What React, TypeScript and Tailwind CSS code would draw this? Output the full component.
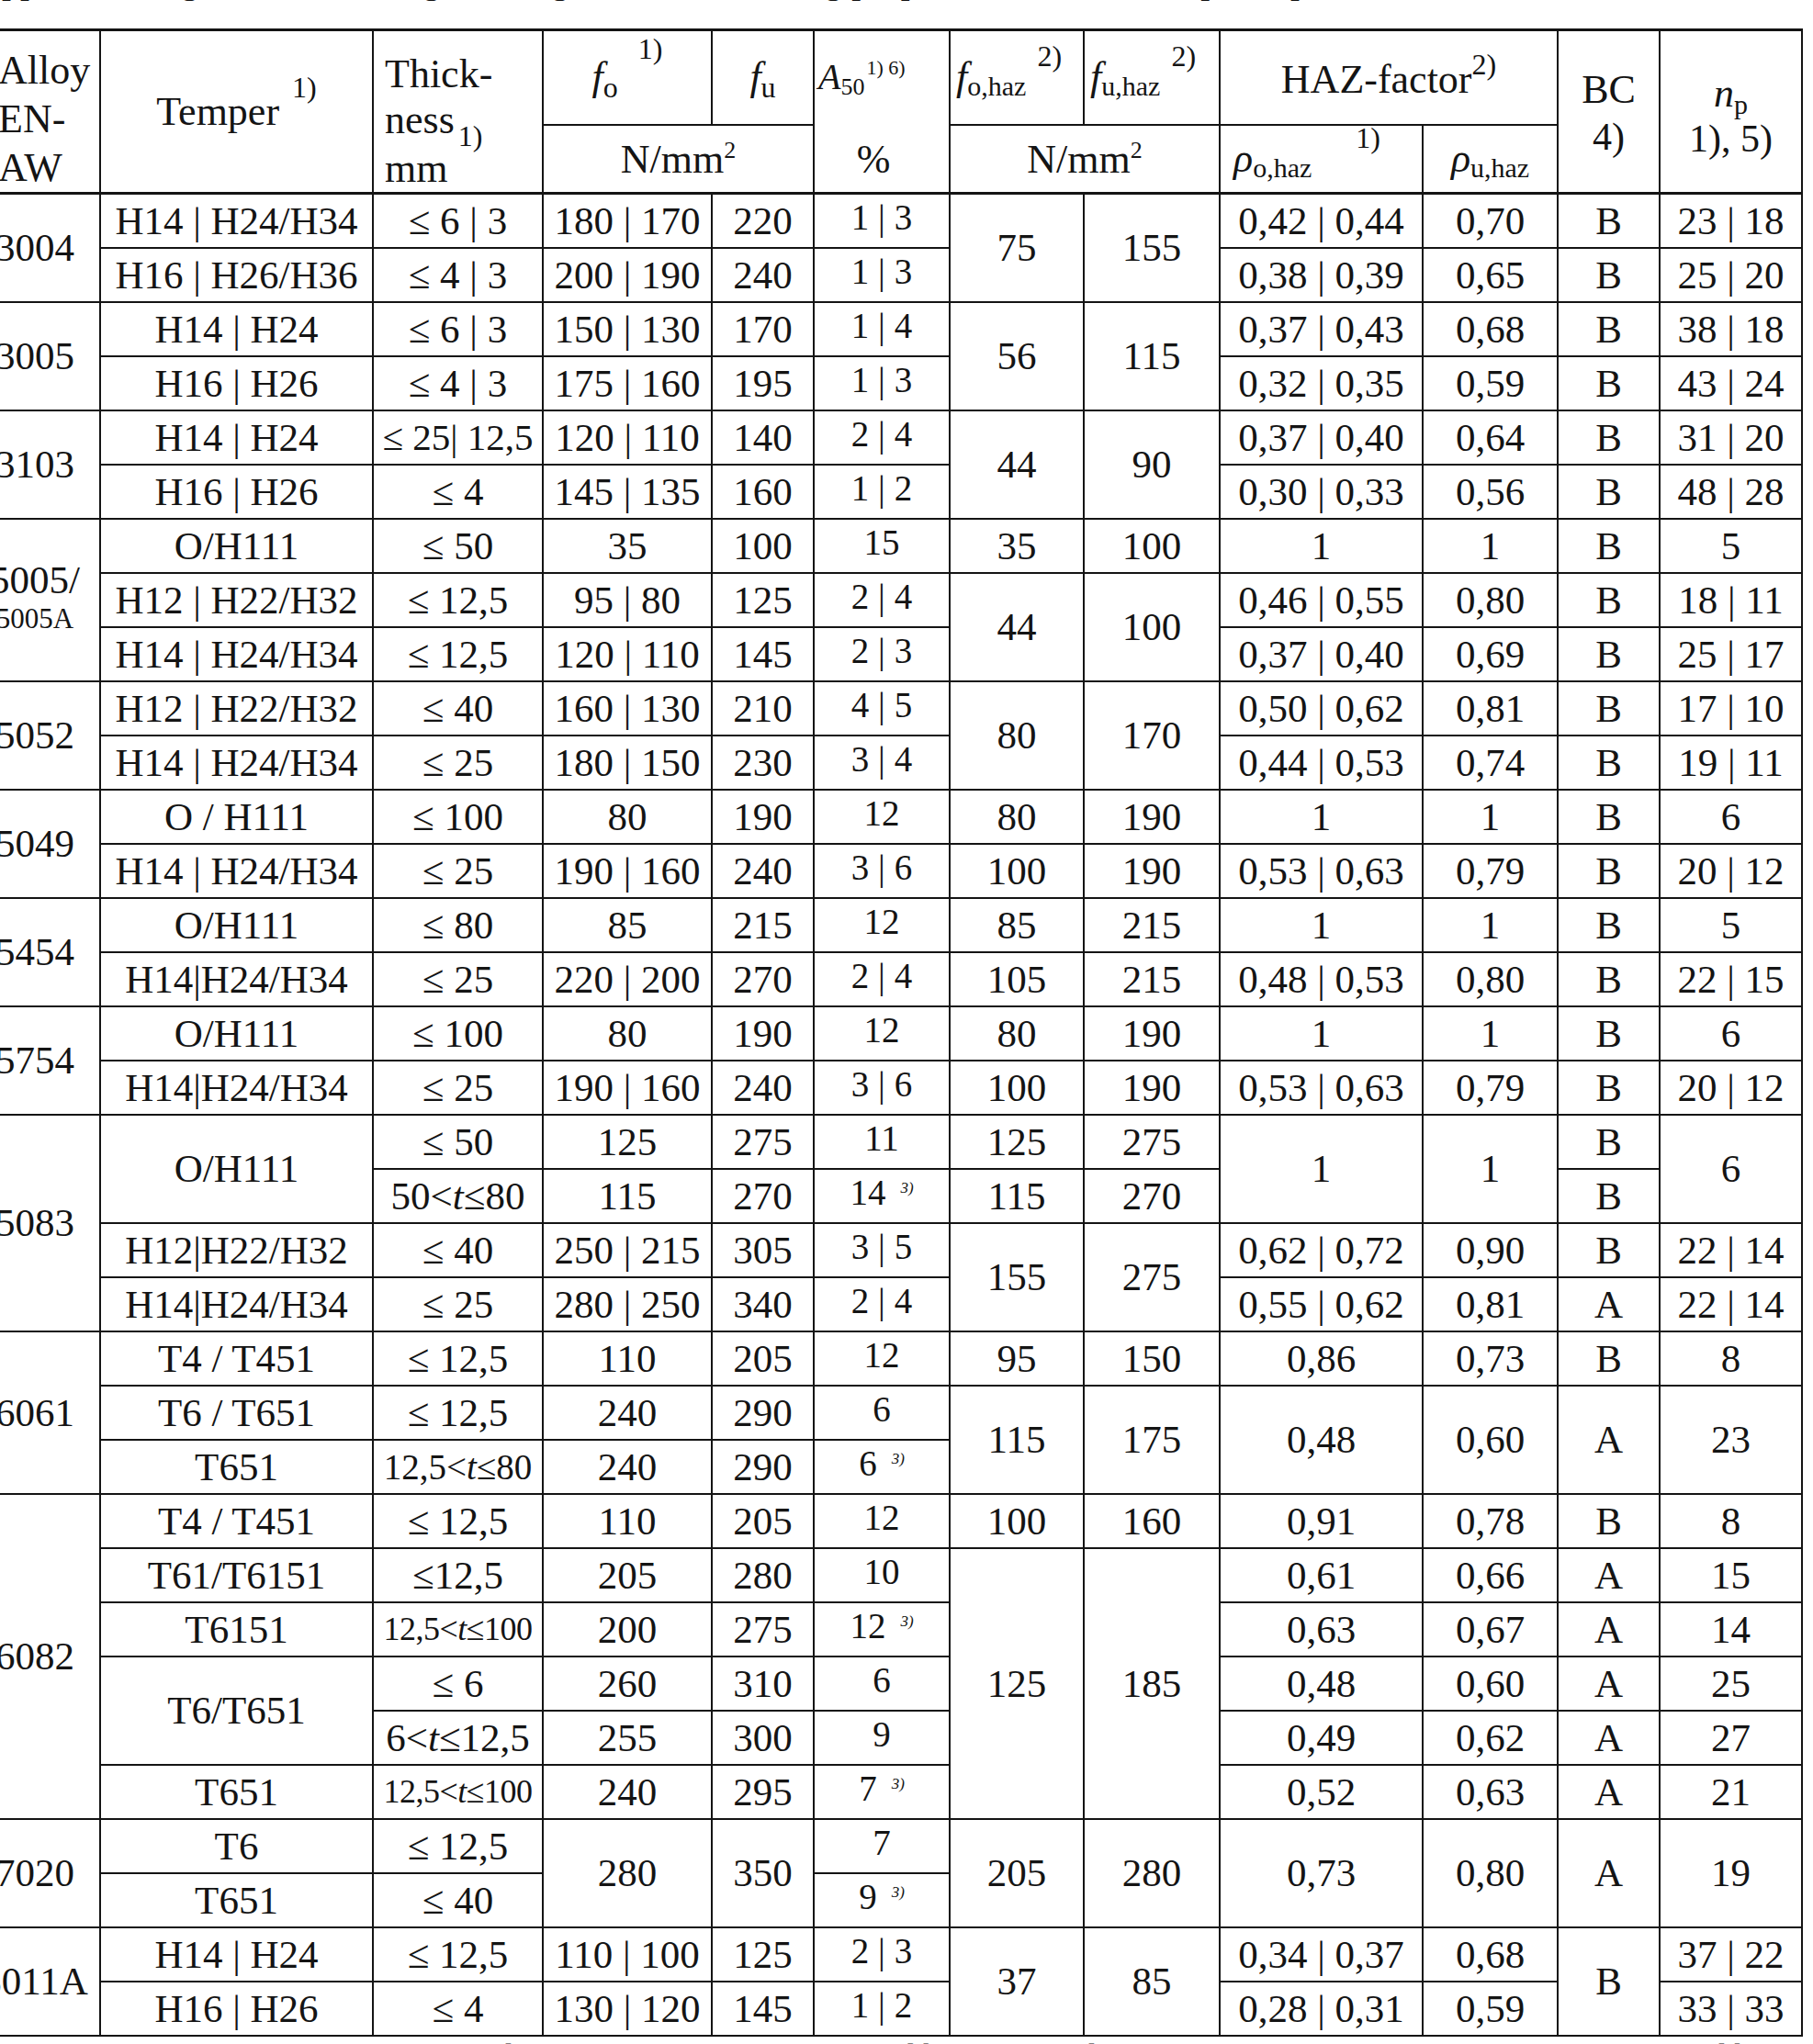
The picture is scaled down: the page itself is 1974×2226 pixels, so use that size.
import type { ReactNode } from "react"

type Cell = { v: ReactNode; rs?: number; cls: string }
type Group = { alloy: ReactNode; rows: Cell[][] }

function c(v: ReactNode, rs?: number, cls = "text-[43px]"): Cell {
  return { v, rs, cls }
}

// elongation figures are set a bit smaller and sit high in the cell
function pc(v: ReactNode, rs?: number): Cell {
  return c(v, rs, "text-[39px] pb-[8px]")
}

function N3({ v }: { v: string }) {
  return (
    <>
      {v}
      <span className="relative -top-[13px] ml-[16px] text-[17px] italic">3)</span>
    </>
  )
}

function Tt({ a, b }: { a: string; b: string }) {
  return (
    <>
      {a}
      <i>t</i>
      {b}
    </>
  )
}

const groups: Group[] = [
  {
    alloy: "3004",
    rows: [
      [c("H14 | H24/H34"), c("≤ 6 | 3"), c("180 | 170"), c("220"), pc("1 | 3"), c("75", 2), c("155", 2), c("0,42 | 0,44"), c("0,70"), c("B"), c("23 | 18")],
      [c("H16 | H26/H36"), c("≤ 4 | 3"), c("200 | 190"), c("240"), pc("1 | 3"), c("0,38 | 0,39"), c("0,65"), c("B"), c("25 | 20")],
    ],
  },
  {
    alloy: "3005",
    rows: [
      [c("H14 | H24"), c("≤ 6 | 3"), c("150 | 130"), c("170"), pc("1 | 4"), c("56", 2), c("115", 2), c("0,37 | 0,43"), c("0,68"), c("B"), c("38 | 18")],
      [c("H16 | H26"), c("≤ 4 | 3"), c("175 | 160"), c("195"), pc("1 | 3"), c("0,32 | 0,35"), c("0,59"), c("B"), c("43 | 24")],
    ],
  },
  {
    alloy: "3103",
    rows: [
      [c("H14 | H24"), c("≤ 25| 12,5", undefined, "text-[41px]"), c("120 | 110"), c("140"), pc("2 | 4"), c("44", 2), c("90", 2), c("0,37 | 0,40"), c("0,64"), c("B"), c("31 | 20")],
      [c("H16 | H26"), c("≤ 4"), c("145 | 135"), c("160"), pc("1 | 2"), c("0,30 | 0,33"), c("0,56"), c("B"), c("48 | 28")],
    ],
  },
  {
    alloy: (
      <div className="leading-[38px]">
        5005/
        <br />
        <span className="text-[31px]">5005A</span>
      </div>
    ),
    rows: [
      [c("O/H111"), c("≤ 50"), c("35"), c("100"), pc("15"), c("35"), c("100"), c("1"), c("1"), c("B"), c("5")],
      [c("H12 | H22/H32"), c("≤ 12,5"), c("95 | 80"), c("125"), pc("2 | 4"), c("44", 2), c("100", 2), c("0,46 | 0,55"), c("0,80"), c("B"), c("18 | 11")],
      [c("H14 | H24/H34"), c("≤ 12,5"), c("120 | 110"), c("145"), pc("2 | 3"), c("0,37 | 0,40"), c("0,69"), c("B"), c("25 | 17")],
    ],
  },
  {
    alloy: "5052",
    rows: [
      [c("H12 | H22/H32"), c("≤ 40"), c("160 | 130"), c("210"), pc("4 | 5"), c("80", 2), c("170", 2), c("0,50 | 0,62"), c("0,81"), c("B"), c("17 | 10")],
      [c("H14 | H24/H34"), c("≤ 25"), c("180 | 150"), c("230"), pc("3 | 4"), c("0,44 | 0,53"), c("0,74"), c("B"), c("19 | 11")],
    ],
  },
  {
    alloy: "5049",
    rows: [
      [c("O / H111"), c("≤ 100"), c("80"), c("190"), pc("12"), c("80"), c("190"), c("1"), c("1"), c("B"), c("6")],
      [c("H14 | H24/H34"), c("≤ 25"), c("190 | 160"), c("240"), pc("3 | 6"), c("100"), c("190"), c("0,53 | 0,63"), c("0,79"), c("B"), c("20 | 12")],
    ],
  },
  {
    alloy: "5454",
    rows: [
      [c("O/H111"), c("≤ 80"), c("85"), c("215"), pc("12"), c("85"), c("215"), c("1"), c("1"), c("B"), c("5")],
      [c("H14|H24/H34"), c("≤ 25"), c("220 | 200"), c("270"), pc("2 | 4"), c("105"), c("215"), c("0,48 | 0,53"), c("0,80"), c("B"), c("22 | 15")],
    ],
  },
  {
    alloy: "5754",
    rows: [
      [c("O/H111"), c("≤ 100"), c("80"), c("190"), pc("12"), c("80"), c("190"), c("1"), c("1"), c("B"), c("6")],
      [c("H14|H24/H34"), c("≤ 25"), c("190 | 160"), c("240"), pc("3 | 6"), c("100"), c("190"), c("0,53 | 0,63"), c("0,79"), c("B"), c("20 | 12")],
    ],
  },
  {
    alloy: "5083",
    rows: [
      [c("O/H111", 2), c("≤ 50"), c("125"), c("275"), pc("11"), c("125"), c("275"), c("1", 2), c("1", 2), c("B"), c("6", 2)],
      [c(<Tt a="50<" b="≤80" />), c("115"), c("270"), pc(<N3 v="14" />), c("115"), c("270"), c("B")],
      [c("H12|H22/H32"), c("≤ 40"), c("250 | 215"), c("305"), pc("3 | 5"), c("155", 2), c("275", 2), c("0,62 | 0,72"), c("0,90"), c("B"), c("22 | 14")],
      [c("H14|H24/H34"), c("≤ 25"), c("280 | 250"), c("340"), pc("2 | 4"), c("0,55 | 0,62"), c("0,81"), c("A"), c("22 | 14")],
    ],
  },
  {
    alloy: "6061",
    rows: [
      [c("T4 / T451"), c("≤ 12,5"), c("110"), c("205"), pc("12"), c("95"), c("150"), c("0,86"), c("0,73"), c("B"), c("8")],
      [c("T6 / T651"), c("≤ 12,5"), c("240"), c("290"), pc("6"), c("115", 2), c("175", 2), c("0,48", 2), c("0,60", 2), c("A", 2), c("23", 2)],
      [c("T651"), c(<Tt a="12,5<" b="≤80" />, undefined, "text-[39px]"), c("240"), c("290"), pc(<N3 v="6" />)],
    ],
  },
  {
    alloy: "6082",
    rows: [
      [c("T4 / T451"), c("≤ 12,5"), c("110"), c("205"), pc("12"), c("100"), c("160"), c("0,91"), c("0,78"), c("B"), c("8")],
      [c("T61/T6151"), c("≤12,5"), c("205"), c("280"), pc("10"), c("125", 5), c("185", 5), c("0,61"), c("0,66"), c("A"), c("15")],
      [c("T6151"), c(<Tt a="12,5<" b="≤100" />, undefined, "text-[36px] tracking-[-0.5px]"), c("200"), c("275"), pc(<N3 v="12" />), c("0,63"), c("0,67"), c("A"), c("14")],
      [c("T6/T651", 2), c("≤ 6"), c("260"), c("310"), pc("6"), c("0,48"), c("0,60"), c("A"), c("25")],
      [c(<Tt a="6<" b="≤12,5" />), c("255"), c("300"), pc("9"), c("0,49"), c("0,62"), c("A"), c("27")],
      [c("T651"), c(<Tt a="12,5<" b="≤100" />, undefined, "text-[36px] tracking-[-0.5px]"), c("240"), c("295"), pc(<N3 v="7" />), c("0,52"), c("0,63"), c("A"), c("21")],
    ],
  },
  {
    alloy: "7020",
    rows: [
      [c("T6"), c("≤ 12,5"), c("280", 2), c("350", 2), pc("7"), c("205", 2), c("280", 2), c("0,73", 2), c("0,80", 2), c("A", 2), c("19", 2)],
      [c("T651"), c("≤ 40"), pc(<N3 v="9" />)],
    ],
  },
  {
    alloy: "8011A",
    rows: [
      [c("H14 | H24"), c("≤ 12,5"), c("110 | 100"), c("125"), pc("2 | 3"), c("37", 2), c("85", 2), c("0,34 | 0,37"), c("0,68"), c("B", 2), c("37 | 22")],
      [c("H16 | H26"), c("≤ 4"), c("130 | 120"), c("145"), pc("1 | 2"), c("0,28 | 0,31"), c("0,59"), c("33 | 33")],
    ],
  },
]

const th = "border-2 border-[#141414] p-0 font-normal text-[44px]"
const td = "border-2 border-[#141414] p-0 text-center align-middle leading-none whitespace-nowrap"

function Sup({ children, cls }: { children: ReactNode; cls: string }) {
  return <span className={`relative text-[32px] ${cls}`}>{children}</span>
}

export default function App() {
  return (
    <div className="relative h-[2226px] w-[1974px] overflow-hidden bg-white font-['Liberation_Serif','Times_New_Roman',serif] text-[#141414]">
      <div className="h-[31px] overflow-hidden">
        <p className="-mt-[41px] whitespace-nowrap pl-[2px] text-[40px] leading-[40px]">
          pproof strength, tensile strength, elongation and buckling properties for sheet, strip and plate
        </p>
      </div>

      <div className="-ml-[34px]">
        <table className="w-[1995px] table-fixed border-collapse">
          <colgroup>
            <col className="w-[142px]" />
            <col className="w-[297px]" />
            <col className="w-[185px]" />
            <col className="w-[184px]" />
            <col className="w-[111px]" />
            <col className="w-[148px]" />
            <col className="w-[146px]" />
            <col className="w-[148px]" />
            <col className="w-[221px]" />
            <col className="w-[147px]" />
            <col className="w-[111px]" />
            <col className="w-[155px]" />
          </colgroup>
          <thead>
            <tr className="h-[103px]">
              <th rowSpan={2} className={`${th} border-t-[3px] pl-[30px] pt-[16px] text-left align-top leading-[53px]`}>
                Alloy
                <br />
                EN-
                <br />
                AW
              </th>
              <th rowSpan={2} className={`${th} border-t-[3px] text-center align-middle leading-none`}>
                Temper
                <Sup cls="-top-[30px] ml-[14px]">1)</Sup>
              </th>
              <th rowSpan={2} className={`${th} border-t-[3px] pl-[12px] pt-[22px] text-left align-top leading-[50px]`}>
                Thick-
                <br />
                ness
                <Sup cls="top-[14px] ml-[4px]">1)</Sup>
                <br />
                mm
              </th>
              <th className={`${th} border-t-[3px] pt-[28px] text-center align-top leading-none`}>
                <i>f</i>
                <span className="relative top-[8px] text-[32px]">o</span>
                <Sup cls="-top-[34px] ml-[22px]">1)</Sup>
              </th>
              <th className={`${th} border-t-[3px] pt-[28px] text-center align-top leading-none`}>
                <i>f</i>
                <span className="relative top-[8px] text-[32px]">u</span>
              </th>
              <th rowSpan={2} className={`${th} border-t-[3px] align-top leading-none`}>
                <div className="whitespace-nowrap pl-[4px] pt-[30px] text-left text-[40px]">
                  <i>A</i>
                  <span className="relative top-[6px] text-[26px]">50</span>
                  <span className="relative -top-[16px] ml-[2px] text-[22px]">1) 6)</span>
                </div>
                <div className="mt-[48px] pr-[18px] text-center">%</div>
              </th>
              <th className={`${th} border-t-[3px] whitespace-nowrap pl-[6px] pt-[28px] text-left align-top leading-none`}>
                <i>f</i>
                <span className="relative top-[6px] text-[30px]">o,haz</span>
                <Sup cls="-top-[26px] ml-[12px]">2)</Sup>
              </th>
              <th className={`${th} border-t-[3px] whitespace-nowrap pl-[6px] pt-[28px] text-left align-top leading-none`}>
                <i>f</i>
                <span className="relative top-[6px] text-[30px]">u,haz</span>
                <Sup cls="-top-[26px] ml-[12px]">2)</Sup>
              </th>
              <th colSpan={2} className={`${th} border-t-[3px] pt-[31px] text-center align-top leading-none`}>
                HAZ-factor
                <Sup cls="-top-[20px]">2)</Sup>
              </th>
              <th rowSpan={2} className={`${th} border-t-[3px] pt-[42px] text-center align-top leading-none`}>
                BC
                <div className="mt-[8px] text-[42px]">4)</div>
              </th>
              <th rowSpan={2} className={`${th} border-t-[3px] pt-[46px] text-center align-top leading-none`}>
                <i>n</i>
                <span className="relative top-[8px] text-[30px]">p</span>
                <div className="mt-[6px] text-[42px]">1), 5)</div>
              </th>
            </tr>
            <tr className="h-[74px]">
              <th colSpan={2} className={`${th} pt-[2px] text-center align-middle leading-none`}>
                N/mm
                <span className="relative -top-[16px] text-[26px]">2</span>
              </th>
              <th colSpan={2} className={`${th} pt-[2px] text-center align-middle leading-none`}>
                N/mm
                <span className="relative -top-[16px] text-[26px]">2</span>
              </th>
              <th className={`${th} whitespace-nowrap pl-[14px] pt-[14px] text-left align-top leading-none`}>
                <i>ρ</i>
                <span className="relative top-[6px] text-[30px]">o,haz</span>
                <Sup cls="-top-[26px] ml-[48px]">1)</Sup>
              </th>
              <th className={`${th} whitespace-nowrap pt-[14px] text-center align-top leading-none`}>
                <i>ρ</i>
                <span className="relative top-[6px] text-[30px]">u,haz</span>
              </th>
            </tr>
          </thead>
          <tbody>
            {groups.map((g, gi) =>
              g.rows.map((row, ri) => (
                <tr key={`${gi}-${ri}`} className="h-[59px]">
                  {ri === 0 ? (
                    <td rowSpan={g.rows.length} className={`${td} text-[43px] ${gi === 0 ? "border-t-[3px]" : ""}`}>
                      {g.alloy}
                    </td>
                  ) : null}
                  {row.map((cell, ci) => (
                    <td
                      key={ci}
                      rowSpan={cell.rs}
                      className={`${td} ${gi === 0 && ri === 0 ? "border-t-[3px]" : ""} ${cell.cls}`}
                    >
                      {cell.v}
                    </td>
                  ))}
                </tr>
              ))
            )}
          </tbody>
        </table>
      </div>

      <p className="mt-[1px] whitespace-nowrap pl-[4px] text-[36px] leading-[40px]">
        1)&nbsp; If two (three) tempers are specified in one line, tempers separated by „|“ have different technological values, tempers separated by „/“ have same values.
      </p>
    </div>
  )
}
